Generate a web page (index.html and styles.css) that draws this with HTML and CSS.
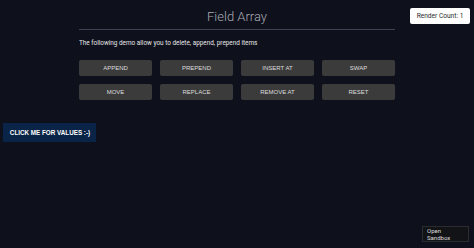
FILE: index.html
```html
<!DOCTYPE html>
<html lang="en">
<head>
  <meta charset="UTF-8">
  <title>Field Array</title>
  <link rel="stylesheet" href="styles.css">
</head>
<body>
  <div class="counter">Render Count: 1</div>
  <div class="container">
    <h1>Field Array</h1>
    <p class="intro">The following demo allow you to delete, append, prepend items</p>
    <div class="actions">
      <button>Append</button>
      <button>Prepend</button>
      <button>Insert at</button>
      <button>Swap</button>
      <button>Move</button>
      <button>Replace</button>
      <button>Remove at</button>
      <button>Reset</button>
    </div>
  </div>
  <button class="values">CLICK ME FOR VALUES :-)</button>
  <div class="sandbox">Open<br>Sandbox</div>
</body>
</html>
```

FILE: styles.css
```css
body {
  margin: 0;
  height: 248px;
  background: #0e101c;
  font-family: Roboto, 'Liberation Sans', sans-serif;
  color: #fff;
  position: relative;
  overflow: hidden;
}
.container {
  width: 316px;
  margin: 0 auto;
  padding-top: 8px;
}
h1 {
  font-weight: 300;
  font-size: 13px;
  line-height: 18px;
  color: #a9abb3;
  text-align: center;
  margin: 0;
  padding-bottom: 3px;
  border-bottom: 1px solid #3d4153;
}
.intro {
  font-size: 6.4px;
  margin: 9px 0 0;
  line-height: 9px;
  color: #e6e6e6;
}
.actions {
  display: grid;
  grid-template-columns: repeat(4, 1fr);
  gap: 8px;
  margin-top: 12px;
}
.actions button {
  height: 16px;
  background: #3b3b3b;
  border: none;
  border-radius: 2px;
  color: #ddd;
  font-family: 'Liberation Sans', Arial, sans-serif;
  font-size: 6px;
  text-transform: uppercase;
  padding: 0;
}
.values {
  display: block;
  margin: 23px 0 0 3px;
  width: 93px;
  height: 19px;
  background: #0a2447;
  border: none;
  color: #fff;
  font-family: 'Liberation Sans', Arial, sans-serif;
  font-weight: bold;
  font-size: 6.3px;
  padding: 0 0 0 1px;
}
.counter {
  position: absolute;
  top: 8px;
  right: 4px;
  width: 60px;
  height: 16px;
  line-height: 16px;
  background: #fff;
  color: #2a2a2a;
  border-radius: 2px;
  font-size: 6.6px;
  text-align: center;
}
.sandbox {
  position: absolute;
  left: 422px;
  top: 226px;
  width: 39px;
  height: 13px;
  padding: 1px 2px 0 4px;
  border: 1px solid #2a2c30;
  background: #121316;
  color: #ddd;
  font-size: 6px;
  line-height: 6.5px;
}
```
